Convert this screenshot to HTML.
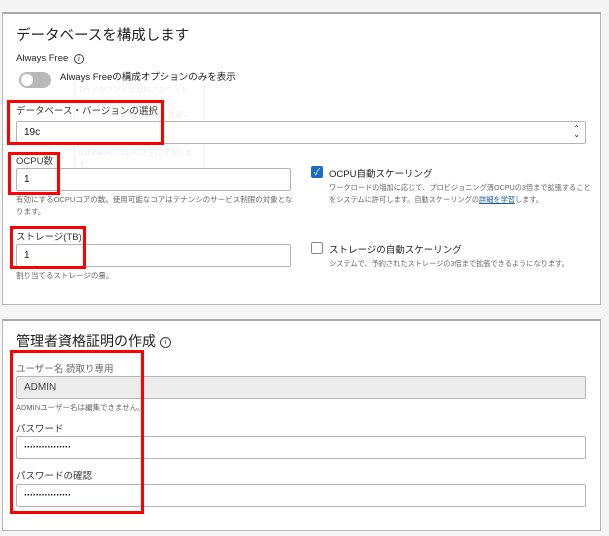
<!DOCTYPE html>
<html><head><meta charset="utf-8"><style>
*{box-sizing:border-box;margin:0;padding:0}
body{width:609px;height:536px;background:#f5f5f5;font-family:"Liberation Sans","Noto Sans CJK JP",sans-serif;color:#161513;position:relative;overflow:hidden}
.card{position:absolute;left:2px;width:599px;background:#fff;border:1px solid #b8b8b8;border-top:2px solid #aaa}
.a{position:absolute;white-space:nowrap}
.inp{position:absolute;border:1px solid #b5b5b5;border-radius:2px;background:#fff;font-size:10px;padding-left:7px;display:flex;align-items:center}
.lbl{font-size:9.5px;color:#3a3a3a}
.help{font-size:7.5px;color:#666}
.red{position:absolute;border:3px solid #f00}
.dots{letter-spacing:-0.4px;font-weight:bold}
</style></head><body>
<div class="card" style="top:12px;height:293px"></div>
<div class="card" style="top:319px;height:212px"></div>

<div class="a" style="left:16px;top:24px;font-size:14.5px;color:#222">データベースを構成します</div>
<div class="a lbl" style="left:16px;top:53px;color:#222">Always Free <span style="display:inline-block;width:10px;height:10px;border:1px solid #444;border-radius:50%;font-size:7px;text-align:center;line-height:9px;font-style:italic;margin-left:3px">i</span></div>
<div class="a" style="left:19px;top:72px;width:32px;height:16px;border-radius:8px;background:#b9b9b9"><div style="position:absolute;left:2px;top:2px;width:12px;height:12px;border-radius:50%;background:#fff"></div></div>
<div class="a" style="left:74px;top:76px;width:131px;height:104px;border:1px solid #f2f2f2"></div>
<div class="a" style="left:78px;top:84px;font-size:7.5px;color:#ececec;line-height:12.5px">Tierアカウントと有料アカウント<br>のどちらでも作成できます。<br>このリソースが課金対象になるこ<br>とはありません。Always Free<br><br>Databaseについてさらに学習しま<br>す。</div>
<div class="a lbl" style="left:60px;top:69px;color:#222">Always Freeの構成オプションのみを表示</div>

<div class="a lbl" style="left:16px;top:103px">データベース・バージョンの選択</div>
<div class="inp" style="left:16px;top:121px;width:570px;height:23px">19c<span style="position:absolute;right:5px;top:4px;font-size:8px;line-height:6px;text-align:center">⌃<br>⌄</span></div>

<div class="a lbl" style="left:16px;top:153px">OCPU数</div>
<div class="inp" style="left:16px;top:168px;width:275px;height:23px">1</div>
<div class="a help" style="left:16px;top:194px;line-height:12px">有効にするOCPUコアの数。使用可能なコアはテナンシのサービス制限の対象とな<br>ります。</div>

<div class="a" style="left:311px;top:166px;width:12px;height:12px;background:#1c6cc4;border-radius:2px;color:#fff;font-size:9px;line-height:12px;text-align:center">✓</div>
<div class="a lbl" style="left:329px;top:166px;color:#222">OCPU自動スケーリング</div>
<div class="a help" style="left:329px;top:182px;line-height:12px;font-size:7.2px">ワークロードの増加に応じて、プロビジョニング済OCPUの3倍まで拡張すること<br>をシステムに許可します。自動スケーリングの<span style="color:#1c5fa8;text-decoration:underline">詳細を学習</span>します。</div>

<div class="a lbl" style="left:16px;top:229px">ストレージ(TB)</div>
<div class="inp" style="left:16px;top:244px;width:275px;height:23px">1</div>
<div class="a help" style="left:16px;top:270px">割り当てるストレージの量。</div>

<div class="a" style="left:311px;top:242px;width:12px;height:12px;border:1px solid #888;border-radius:2px;background:#fff"></div>
<div class="a lbl" style="left:329px;top:242px;color:#222">ストレージの自動スケーリング</div>
<div class="a help" style="left:329px;top:259px;font-size:7.2px">システムで、予約されたストレージの3倍まで拡張できるようになります。</div>

<div class="a" style="left:16px;top:331px;font-size:14px;color:#222">管理者資格証明の作成 <span style="display:inline-block;width:11px;height:11px;border:1px solid #444;border-radius:50%;font-size:7px;text-align:center;line-height:10px;font-style:italic;vertical-align:2px">i</span></div>
<div class="a lbl" style="left:16px;top:361px;color:#666">ユーザー名 読取り専用</div>
<div class="inp" style="left:16px;top:376px;width:570px;height:23px;background:#ececec;color:#444">ADMIN</div>
<div class="a help" style="left:16px;top:402px">ADMINユーザー名は編集できません。</div>
<div class="a lbl" style="left:16px;top:421px">パスワード</div>
<div class="inp dots" style="left:16px;top:436px;width:570px;height:23px">················</div>
<div class="a lbl" style="left:16px;top:468px">パスワードの確認</div>
<div class="inp dots" style="left:16px;top:484px;width:570px;height:23px">················</div>

<div class="red" style="left:7px;top:100px;width:157px;height:45px"></div>
<div class="red" style="left:8px;top:152px;width:52px;height:43px"></div>
<div class="red" style="left:10px;top:226px;width:76px;height:43px"></div>
<div class="red" style="left:10px;top:350px;width:134px;height:164px"></div>
</body></html>
